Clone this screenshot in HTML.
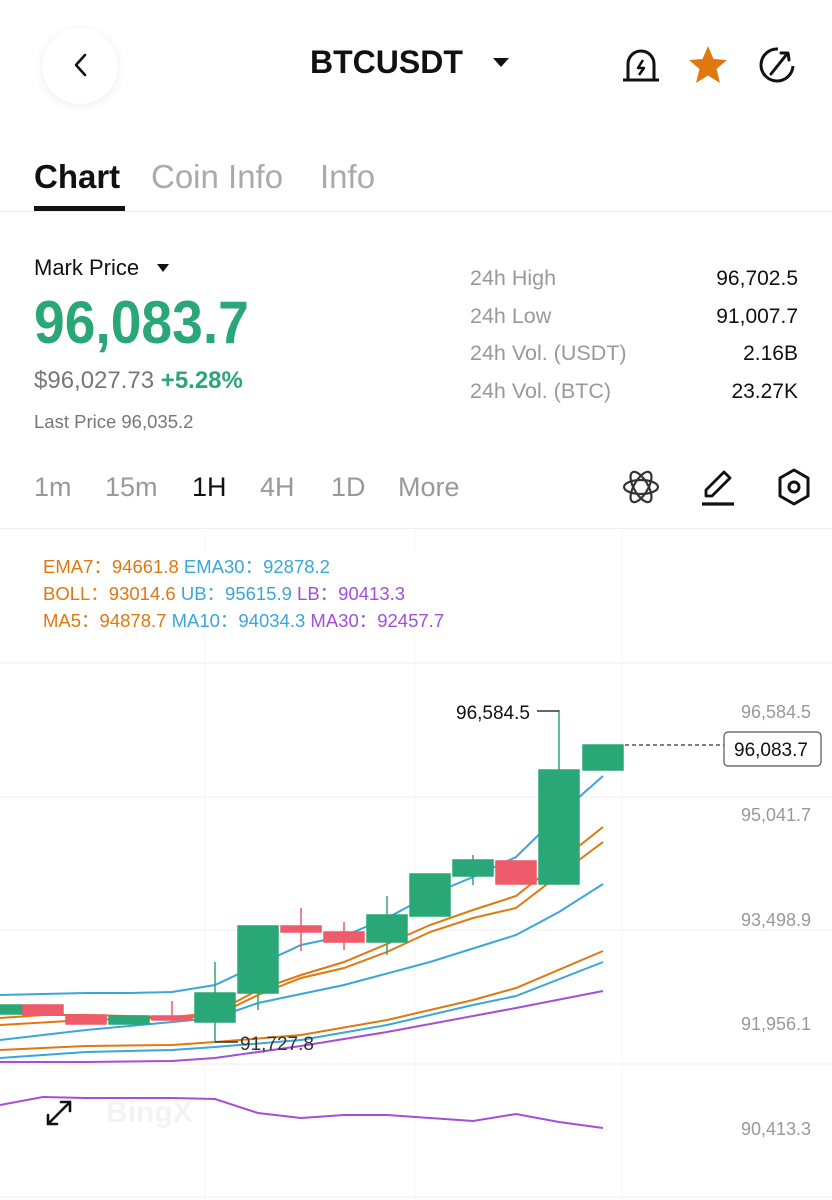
<!DOCTYPE html>
<html><head><meta charset="utf-8"><style>
body{margin:0;width:832px;height:1200px;background:#fff;font-family:"Liberation Sans",sans-serif;position:relative;overflow:hidden}
.a{position:absolute;white-space:nowrap}
.n{display:inline-block;transform:scaleX(.92);transform-origin:left center}
.r{transform-origin:right center}
</style></head><body>
<div class="a" style="left:42px;top:28px;width:76px;height:76px;border-radius:50%;background:#fff;box-shadow:0 2px 10px rgba(0,0,0,.08)"></div>
<svg class="a" style="left:70px;top:52px" width="22" height="26"><path d="M15 3 L6 13 L15 23" stroke="#111" stroke-width="2.6" fill="none" stroke-linecap="round" stroke-linejoin="round"/></svg>
<div class="a" style="left:310px;top:44px;font-size:32px;font-weight:bold;color:#111">BTCUSDT</div>
<svg class="a" style="left:492px;top:56px" width="18" height="14"><path d="M1 2 H17 L9 11Z" fill="#111"/></svg>
<svg class="a" style="left:620px;top:44px" width="42" height="42"><path d="M8 36 V20 A13 13 0 0 1 34 20 V36" stroke="#111" stroke-width="3" fill="none"/><path d="M3 36 H39" stroke="#111" stroke-width="3"/><path d="M23 16 L18 24 H24 L19 31" stroke="#111" stroke-width="2.5" fill="none" stroke-linejoin="round"/></svg>
<svg class="a" style="left:686px;top:44px" width="44" height="42"><path d="M22 2 L27.5 15 L41 16 L30.5 25 L34 39 L22 31.5 L10 39 L13.5 25 L3 16 L16.5 15Z" fill="#e0780f"/></svg>
<svg class="a" style="left:756px;top:44px" width="42" height="42"><path d="M22 5 A16 16 0 1 0 37 22" stroke="#111" stroke-width="3" fill="none"/><path d="M15 30 L31 10" stroke="#111" stroke-width="3" stroke-linecap="round"/><path d="M25 9 L32 9 L33 16" stroke="#111" stroke-width="3" fill="none" stroke-linecap="round" stroke-linejoin="round"/></svg>

<div class="a" style="left:34px;top:158px;font-size:33px;font-weight:bold;color:#111">Chart</div>
<div class="a" style="left:151px;top:158px;font-size:33px;color:#aaa">Coin Info</div>
<div class="a" style="left:320px;top:158px;font-size:33px;color:#aaa">Info</div>
<div class="a" style="left:34px;top:206px;width:91px;height:5px;background:#111"></div>
<div class="a" style="left:0;top:211px;width:832px;height:1px;background:#eee"></div>

<div class="a" style="left:34px;top:255px;font-size:22px;color:#111">Mark Price</div>
<svg class="a" style="left:156px;top:263px" width="14" height="10"><path d="M1 1 H13 L7 9Z" fill="#111"/></svg>
<div class="a" style="left:34px;top:288px;font-size:60px;color:#2aa776;font-weight:bold"><span class="n" style="transform:scaleX(.92)">96,083.7</span></div>
<div class="a" style="left:34px;top:367px;font-size:24px;color:#777">$96,027.73 <span style="color:#2aa776;font-weight:bold">+5.28%</span></div>
<div class="a" style="left:34px;top:411px;font-size:18.5px;color:#777">Last Price 96,035.2</div>

<div class="a" style="left:470px;top:260px;font-size:21.5px;color:#999;line-height:37.5px">24h High<br>24h Low<br>24h Vol. (USDT)<br>24h Vol. (BTC)</div>
<div class="a" style="right:34px;top:260px;font-size:21px;color:#111;line-height:37.5px;text-align:right">96,702.5<br>91,007.7<br>2.16B<br>23.27K</div>

<div class="a" style="left:34px;top:472px;font-size:27px;color:#999">1m</div>
<div class="a" style="left:105px;top:472px;font-size:27px;color:#999">15m</div>
<div class="a" style="left:192px;top:472px;font-size:27px;color:#111">1H</div>
<div class="a" style="left:260px;top:472px;font-size:27px;color:#999">4H</div>
<div class="a" style="left:331px;top:472px;font-size:27px;color:#999">1D</div>
<div class="a" style="left:398px;top:472px;font-size:27px;color:#999">More</div>
<svg class="a" style="left:620px;top:466px" width="42" height="42"><g stroke="#333" stroke-width="2.2" fill="none"><ellipse cx="21" cy="21" rx="17" ry="7"/><ellipse cx="21" cy="21" rx="17" ry="7" transform="rotate(60 21 21)"/><ellipse cx="21" cy="21" rx="17" ry="7" transform="rotate(120 21 21)"/></g></svg>
<svg class="a" style="left:698px;top:466px" width="40" height="42"><path d="M8 30 L8 24 L26 6 L32 12 L14 30Z" stroke="#111" stroke-width="2.8" fill="none" stroke-linejoin="round"/><path d="M4 38 H36" stroke="#111" stroke-width="3.2"/></svg>
<svg class="a" style="left:774px;top:466px" width="40" height="42"><path d="M20 4 L34 12 V30 L20 38 L6 30 V12Z" stroke="#111" stroke-width="3" fill="none" stroke-linejoin="round"/><circle cx="20" cy="21" r="5" stroke="#111" stroke-width="3" fill="none"/></svg>

<div class="a" style="left:0;top:528px;width:832px;height:1px;background:#f0f0f0"></div>

<svg class="a" style="left:0;top:0" width="832" height="1200">
<g stroke="#f0f0f0" stroke-width="1.2">
<line x1="0" y1="663" x2="832" y2="663"/><line x1="0" y1="797" x2="832" y2="797"/><line x1="0" y1="930" x2="832" y2="930"/><line x1="0" y1="1064" x2="832" y2="1064"/><line x1="0" y1="1197" x2="832" y2="1197"/>
</g>
<g stroke="#f6f6f6" stroke-width="1.2">
<line x1="205" y1="530" x2="205" y2="1200"/><line x1="415" y1="530" x2="415" y2="1200"/><line x1="622" y1="530" x2="622" y2="1200"/>
</g>
<text x="106" y="1122" font-size="30" font-weight="bold" fill="#f3f3f3" font-family="Liberation Sans">BingX</text>
<g fill="none" stroke-width="2">
<polyline stroke="#3aa6d9" points="0,995 43,994 86,993 129,993 172,992 215,985 258,965 301,945 344,936 387,918 430,895 473,877 516,857 559,815 603,776"/>
<polyline stroke="#e0780f" points="0,1018 43,1015 86,1015 129,1016 172,1017 215,1013 258,990 301,975 344,962 387,944 430,925 473,910 516,896 559,862 603,827"/>
<polyline stroke="#e0780f" points="0,1025 86,1020 172,1018 215,1016 258,995 301,978 344,968 387,952 430,932 473,918 516,908 559,875 603,842"/>
<polyline stroke="#3aa6d9" points="0,1040 86,1030 172,1022 215,1018 258,1003 344,985 430,962 516,935 559,912 603,884"/>
<polyline stroke="#e0780f" points="0,1050 86,1046 172,1045 215,1042 301,1035 387,1020 473,1000 516,988 603,951"/>
<polyline stroke="#3aa6d9" points="0,1058 86,1052 172,1050 215,1047 301,1040 387,1025 473,1005 516,996 603,962"/>
<polyline stroke="#a34fd6" points="0,1062 86,1062 172,1061 215,1058 301,1046 387,1032 473,1016 516,1008 603,991"/>
<polyline stroke="#a34fd6" points="0,1105 43,1097 86,1098 172,1098 215,1099 258,1113 301,1118 344,1115 387,1115 430,1118 473,1121 516,1114 559,1122 603,1128"/>
</g>
<g stroke-width="1.5">
<g fill="#2aa776" stroke="#2aa776">
<rect x="-18" y="1005" width="40" height="9"/><rect x="109" y="1016" width="40" height="8"/>
<line x1="215" y1="962" x2="215" y2="1043"/><rect x="195" y="993" width="40" height="29"/>
<line x1="258" y1="993" x2="258" y2="1010"/><rect x="238" y="926" width="40" height="67"/>
<line x1="387" y1="896" x2="387" y2="955"/><rect x="367" y="915" width="40" height="27"/>
<rect x="410" y="874" width="40" height="42"/>
<line x1="473" y1="855" x2="473" y2="885"/><rect x="453" y="860" width="40" height="16"/>
<line x1="559" y1="710" x2="559" y2="770"/><rect x="539" y="770" width="40" height="114"/>
<rect x="583" y="745" width="40" height="25"/>
</g>
<g fill="#ee5b6a" stroke="#ee5b6a">
<rect x="23" y="1005" width="40" height="10"/><rect x="66" y="1015" width="40" height="9"/>
<line x1="172" y1="1001" x2="172" y2="1023"/><rect x="152" y="1016" width="40" height="4"/>
<line x1="301" y1="908" x2="301" y2="951"/><rect x="281" y="926" width="40" height="6"/>
<line x1="344" y1="922" x2="344" y2="950"/><rect x="324" y="932" width="40" height="10"/>
<rect x="496" y="861" width="40" height="23"/>
</g>
</g>
<path d="M537 711 H559" stroke="#333" stroke-width="1.5"/>
<path d="M215 1042 H238" stroke="#333" stroke-width="1.5"/>
<text x="456" y="719" font-size="19" fill="#111" font-family="Liberation Sans">96,584.5</text>
<text x="240" y="1050" font-size="19" fill="#333" font-family="Liberation Sans">91,727.8</text>
<line x1="625" y1="745" x2="724" y2="745" stroke="#333" stroke-width="1.2" stroke-dasharray="4,3"/>
<rect x="724" y="732" width="97" height="34" rx="4" fill="#fff" stroke="#555" stroke-width="1.2"/>
<text x="734" y="756" font-size="19" fill="#111" font-family="Liberation Sans">96,083.7</text>
<g font-size="18" fill="#999" font-family="Liberation Sans">
<text x="741" y="718">96,584.5</text>
<text x="741" y="821">95,041.7</text>
<text x="741" y="926">93,498.9</text>
<text x="741" y="1030">91,956.1</text>
<text x="741" y="1135">90,413.3</text>
</g>
<g stroke="#111" stroke-width="2.6" fill="none" stroke-linecap="round">
<path d="M48 1124 L70 1102"/><path d="M48 1124 V1115 M48 1124 H57"/><path d="M70 1102 V1111 M70 1102 H61"/>
</g>
</svg>
<div class="a" style="left:43px;top:553px;font-size:18.5px;line-height:27px;background:#fff"><span style="color:#e0780f">EMA7：94661.8 </span><span style="color:#3aa6d9">EMA30：92878.2</span><br><span style="color:#e0780f">BOLL：93014.6 </span><span style="color:#3aa6d9">UB：95615.9 </span><span style="color:#a34fd6">LB：90413.3</span><br><span style="color:#e0780f">MA5：94878.7 </span><span style="color:#3aa6d9">MA10：94034.3 </span><span style="color:#a34fd6">MA30：92457.7</span></div>
</body></html>
